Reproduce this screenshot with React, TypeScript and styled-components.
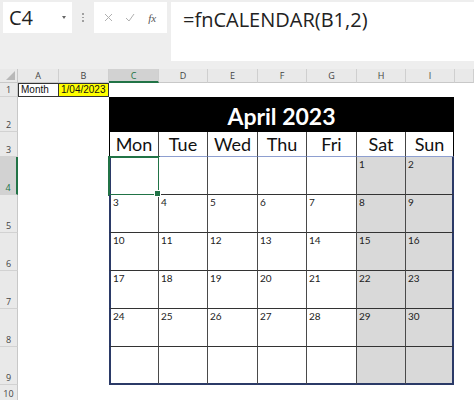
import React from "react";
import styled, { createGlobalStyle, css } from "styled-components";

const GlobalStyle = createGlobalStyle`
  html, body { margin: 0; padding: 0; background: #ffffff; }
  body { font-family: "Lato", "Liberation Sans", sans-serif; width: 474px; height: 400px; overflow: hidden; }
  * { box-sizing: border-box; }
`;

const Page = styled.div`
  display: flex;
  flex-direction: column;
  width: 474px;
  height: 400px;
  overflow: hidden;
  background: #ffffff;
`;

const TopBar = styled.div`
  display: flex;
  align-items: flex-start;
  height: 69px;
  padding-top: 2px;
  background: #eeeeee;
  flex-shrink: 0;
`;

const NameBox = styled.div`
  position: relative;
  width: 69px;
  height: 31px;
  margin-left: 3px;
  background: #ffffff;
  display: flex;
  align-items: center;
  padding-left: 6px;
  font-family: "Open Sans", "Liberation Sans", sans-serif;
  font-size: 20px;
  color: #222;
`;

const Caret = styled.span`
  position: absolute;
  right: 6px;
  top: 14px;
  width: 0;
  height: 0;
  border-left: 2.5px solid transparent;
  border-right: 2.5px solid transparent;
  border-top: 3px solid #666;
`;

const Dots = styled.div`
  width: 22px;
  height: 31px;
  display: flex;
  flex-direction: column;
  align-items: center;
  justify-content: center;
  gap: 2px;
  & > span {
    width: 1.5px;
    height: 1.5px;
    background: #a0a0a0;
  }
`;

const FxGroup = styled.div`
  width: 73px;
  height: 31px;
  background: #ffffff;
  display: flex;
  align-items: center;
  justify-content: space-around;
  padding: 0 4px;
`;

const FxIcon = styled.span<{ $dark?: boolean }>`
  display: flex;
  align-items: center;
  justify-content: center;
  width: 18px;
  color: ${(p) => (p.$dark ? "#555" : "#b0b0b0")};
  font-family: "Liberation Serif", serif;
  font-style: italic;
  font-size: 11px;
`;

const FormulaBox = styled.div`
  flex: 1;
  height: 59px;
  margin-left: 4px;
  background: #ffffff;
  padding: 4px 0 0 12px;
  font-family: "Open Sans", "Liberation Sans", sans-serif;
  font-size: 20px;
  color: #222;
  white-space: nowrap;
`;

const Sheet = styled.div`
  display: grid;
  grid-template-columns: 18px 41px 50px 50px 49px 50px 49px 50px 49px 49px 19px;
  grid-template-rows: 14px 14px 35px 25px 38px 38px 38px 38px 38px 38px 16px;
  background: #ffffff;
`;

const headerBase = css`
  background: #e9e9e9;
  color: #444;
  font-family: "Open Sans", "Liberation Sans", sans-serif;
  font-size: 9px;
`;

const Corner = styled.div`
  ${headerBase};
  grid-row: 1;
  grid-column: 1;
  position: relative;
  border-right: 1px solid #c8c8c8;
  border-bottom: 1px solid #c8c8c8;
  &::after {
    content: "";
    position: absolute;
    right: 2px;
    bottom: 2px;
    width: 0;
    height: 0;
    border-left: 9px solid transparent;
    border-bottom: 9px solid #b8b8b8;
  }
`;

const ColHeader = styled.div<{ $col: number; $selected?: boolean }>`
  ${headerBase};
  grid-row: 1;
  grid-column: ${(p) => p.$col};
  display: flex;
  align-items: center;
  justify-content: center;
  border-right: 1px solid #cfcfcf;
  border-bottom: 1px solid #c8c8c8;
  ${(p) =>
    p.$selected &&
    css`
      background: #d2d2d2;
      color: #217346;
      border-bottom: 2px solid #217346;
    `}
`;

const RowHeader = styled.div<{ $row: number; $selected?: boolean }>`
  ${headerBase};
  grid-column: 1;
  grid-row: ${(p) => p.$row};
  display: flex;
  align-items: flex-end;
  justify-content: center;
  line-height: 13px;
  border-right: 1px solid #c8c8c8;
  border-bottom: 1px solid #d2d2d2;
  ${(p) =>
    p.$selected &&
    css`
      background: #d2d2d2;
      color: #217346;
      border-right: 2px solid #217346;
    `}
`;

const TextCell = styled.div<{ $col: number; $fill?: string }>`
  grid-row: 2;
  grid-column: ${(p) => p.$col};
  background: ${(p) => p.$fill || "#ffffff"};
  border: 1px solid #333;
  border-left-width: ${(p) => (p.$col === 2 ? "1px" : "0")};
  display: flex;
  align-items: flex-end;
  padding: 0 0 0 2px;
  font-family: "Liberation Sans", "Lato", sans-serif;
  font-size: 10px;
  line-height: 13px;
  color: #111;
  white-space: nowrap;
  overflow: hidden;
`;

const Calendar = styled.div`
  grid-column: 4 / 11;
  grid-row: 3 / 11;
  display: grid;
  grid-template-columns: 50px 49px 50px 49px 50px 49px 48px;
  grid-template-rows: 35px 25px repeat(6, 38px);
`;

const Title = styled.div`
  grid-column: 1 / -1;
  background: #000000;
  color: #ffffff;
  display: flex;
  align-items: center;
  justify-content: center;
  font-family: "Lato", "Liberation Sans", sans-serif;
  font-weight: 700;
  font-size: 23px;
  padding-top: 2px;
`;

const DayHead = styled.div<{ $first?: boolean; $last?: boolean }>`
  background: #ffffff;
  display: flex;
  align-items: center;
  justify-content: center;
  font-family: "Lato", "Liberation Sans", sans-serif;
  font-size: 18px;
  color: #111;
  border-right: 1px solid ${(p) => (p.$last ? "#000" : "#444")};
  border-left: ${(p) => (p.$first ? "1px solid #000" : "none")};
  border-bottom: 1px solid #8e9fd0;
`;

const DayCell = styled.div<{
  $weekend?: boolean;
  $first?: boolean;
  $last?: boolean;
  $bottom?: boolean;
  $selected?: boolean;
}>`
  position: relative;
  background: ${(p) => (p.$weekend ? "#d9d9d9" : "#ffffff")};
  border-right: ${(p) => (p.$last ? "2px solid #2b3a67" : "1px solid #4a4a4a")};
  border-left: ${(p) => (p.$first ? "2px solid #2b3a67" : "none")};
  border-bottom: ${(p) => (p.$bottom ? "2px solid #2b3a67" : "1px solid #333")};
  padding: 2px 0 0 2px;
  font-family: "Lato", "Liberation Sans", sans-serif;
  font-size: 10px;
  line-height: 11px;
  color: #222;
  ${(p) =>
    p.$selected &&
    css`
      outline: 2px solid #217346;
      outline-offset: -1px;
      &::after {
        content: "";
        position: absolute;
        right: -3px;
        bottom: -3px;
        width: 5px;
        height: 5px;
        background: #217346;
        border: 1px solid #ffffff;
        z-index: 2;
      }
    `}
`;

const cols = ["A", "B", "C", "D", "E", "F", "G", "H", "I", ""];
const days = ["Mon", "Tue", "Wed", "Thu", "Fri", "Sat", "Sun"];

function buildWeeks(): (number | null)[][] {
  const weeks: (number | null)[][] = [];
  let day = 1;
  const start = 5;
  for (let w = 0; w < 6; w++) {
    const row: (number | null)[] = [];
    for (let d = 0; d < 7; d++) {
      const idx = w * 7 + d;
      if (idx >= start && day <= 30) {
        row.push(day++);
      } else {
        row.push(null);
      }
    }
    weeks.push(row);
  }
  return weeks;
}

const XIcon = () => (
  <svg width="9" height="9" viewBox="0 0 9 9">
    <path d="M1 1 L8 8 M8 1 L1 8" stroke="#b0b0b0" strokeWidth="1" fill="none" />
  </svg>
);

const CheckIcon = () => (
  <svg width="10" height="9" viewBox="0 0 10 9">
    <path d="M1 5 L4 8 L9 1" stroke="#b0b0b0" strokeWidth="1" fill="none" />
  </svg>
);

export default function App() {
  const weeks = buildWeeks();
  return (
    <Page>
      <GlobalStyle />
      <TopBar>
        <NameBox>
          C4
          <Caret />
        </NameBox>
        <Dots>
          <span />
          <span />
          <span />
        </Dots>
        <FxGroup>
          <FxIcon>
            <XIcon />
          </FxIcon>
          <FxIcon>
            <CheckIcon />
          </FxIcon>
          <FxIcon $dark>fx</FxIcon>
        </FxGroup>
        <FormulaBox>=fnCALENDAR(B1,2)</FormulaBox>
      </TopBar>
      <Sheet>
        <Corner />
        {cols.map((c, i) => (
          <ColHeader key={i} $col={i + 2} $selected={c === "C"}>
            {c}
          </ColHeader>
        ))}
        {Array.from({ length: 10 }, (_, i) => (
          <RowHeader key={i} $row={i + 2} $selected={i + 1 === 4}>
            {i + 1}
          </RowHeader>
        ))}
        <TextCell $col={2}>Month</TextCell>
        <TextCell $col={3} $fill="#ffff00">
          1/04/2023
        </TextCell>
        <Calendar>
          <Title>April 2023</Title>
          {days.map((d, i) => (
            <DayHead key={d} $first={i === 0} $last={i === 6}>
              {d}
            </DayHead>
          ))}
          {weeks.map((w, wi) =>
            w.map((n, di) => (
              <DayCell
                key={`${wi}-${di}`}
                $weekend={di >= 5}
                $first={di === 0}
                $last={di === 6}
                $bottom={wi === 5}
                $selected={wi === 0 && di === 0}
              >
                {n ?? ""}
              </DayCell>
            ))
          )}
        </Calendar>
      </Sheet>
    </Page>
  );
}
